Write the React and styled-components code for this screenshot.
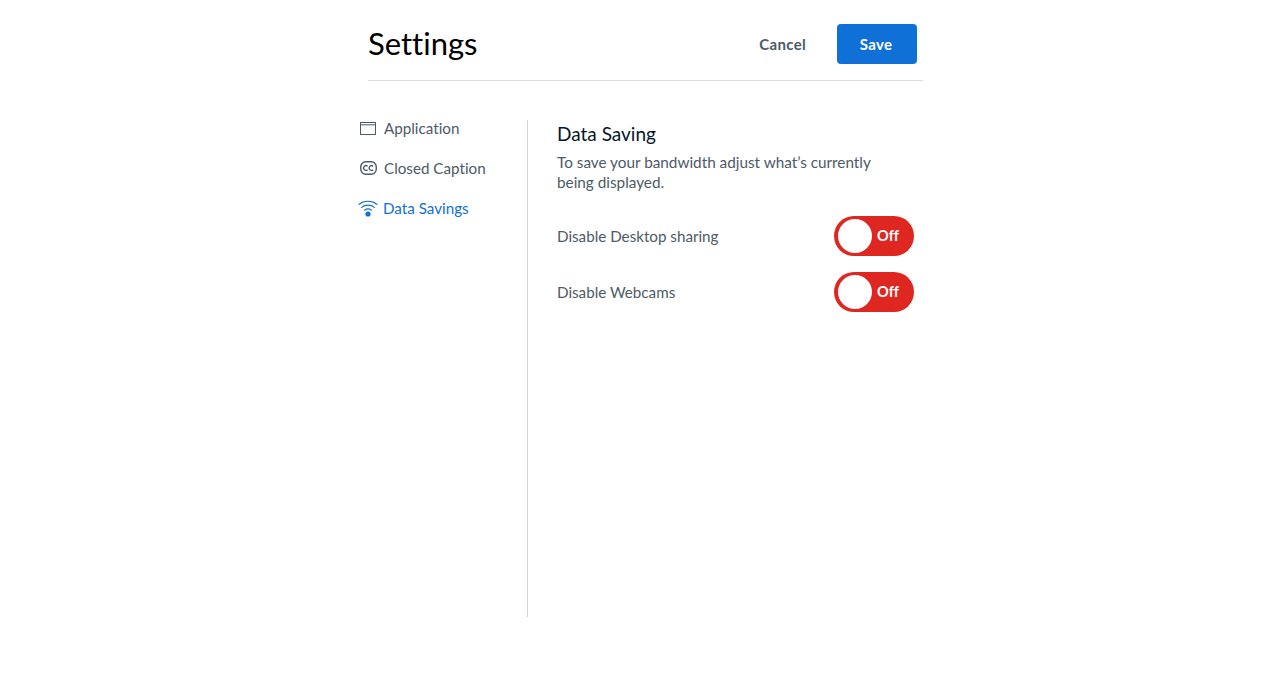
import React from 'react';
import styled, { createGlobalStyle } from 'styled-components';

const Global = createGlobalStyle`
  html, body { margin: 0; padding: 0; background: #fff; }
  body {
    font-family: Lato, "Open Sans", "Liberation Sans", sans-serif;
    font-variant-ligatures: none;
  }
`;

const Page = styled.div`
  width: 566px;
  margin: 0 auto;
  padding-top: 24px;
`;

const Header = styled.header`
  display: flex;
  align-items: flex-start;
  justify-content: space-between;
  height: 56px;
  margin-left: 11px;
  padding-right: 6px;
  border-bottom: 1px solid #d9dce1;
`;

const Title = styled.h1`
  margin: 0;
  font-size: 31px;
  line-height: 38px;
  font-weight: 400;
  color: #000;
`;

const Actions = styled.div`
  display: flex;
  align-items: center;
  gap: 31px;
`;

const CancelButton = styled.button`
  border: 0;
  padding: 0;
  background: none;
  font: 700 15px Lato, sans-serif;
  font-variant-ligatures: none;
  letter-spacing: 0.3px;
  color: #4e5a66;
`;

const SaveButton = styled.button`
  width: 80px;
  height: 40px;
  padding: 0 2px 0 0;
  border: 0;
  border-radius: 4px;
  background: #0f70d7;
  color: #fff;
  font: 700 15px Lato, sans-serif;
  letter-spacing: 0.3px;
`;

const Body = styled.div`
  display: flex;
  margin-top: 39px;
  height: 497px;
`;

const Sidebar = styled.nav`
  width: 170px;
  border-right: 1px solid #d0d3d8;
  display: flex;
  flex-direction: column;
  gap: 24px;
`;

const NavItem = styled.a`
  display: grid;
  grid-template-columns: 22px auto;
  grid-template-rows: 16px;
  justify-content: start;
  justify-items: center;
  align-items: center;
  height: 16px;
  line-height: 16px;
  column-gap: ${(p) => (p.$active ? '4px' : '5px')};
  font-size: 15.2px;
  color: ${(p) => (p.$active ? '#0f70d7' : '#4e5a66')};
`;

const Content = styled.section`
  flex: 1;
  padding: 2px 9px 0 29px;
`;

const SectionTitle = styled.h2`
  margin: 0;
  font-size: 19px;
  line-height: 24px;
  font-weight: 400;
  color: #06172a;
`;

const Description = styled.p`
  margin: 6px 0 24px;
  max-width: 340px;
  font-size: 15.3px;
  line-height: 20px;
  color: #4e5a66;
`;

const Row = styled.div`
  display: flex;
  align-items: center;
  justify-content: space-between;
  height: 40px;
  margin-bottom: 16px;
  font-size: 15.2px;
  color: #4e5a66;
`;

const Toggle = styled.button`
  display: flex;
  align-items: center;
  gap: 5px;
  width: 80px;
  height: 40px;
  padding: 0 0 2px 4px;
  border: 0;
  border-radius: 20px;
  background: #df2721;
  color: #fff;
  font: 700 14.5px Lato, sans-serif;
  font-variant-ligatures: none;
`;

const Knob = styled.span`
  width: 34px;
  height: 34px;
  margin-top: 2px;
  border-radius: 50%;
  background: #fff;
`;

const AppIcon = () => (
  <svg width="16" height="13" viewBox="0 0 16 13" fill="none" stroke="#4e5a66" strokeWidth="1">
    <rect x="0.5" y="0.5" width="15" height="12" />
    <path d="M0.5 2.8h15" />
  </svg>
);

const CcIcon = () => (
  <svg width="17" height="14" viewBox="0 0 17 14" fill="none" stroke="#4e5a66">
    <rect x="0.75" y="0.75" width="15.5" height="12.5" rx="5" strokeWidth="1.4" />
    <path d="M7.6 5.2a2.4 2.4 0 1 0 0 3.6M13.2 5.2a2.4 2.4 0 1 0 0 3.6" strokeWidth="1.3" />
  </svg>
);

const WifiIcon = () => (
  <svg width="20" height="17" viewBox="0 0 20 17" fill="none" stroke="#0f70d7" strokeWidth="1.2" strokeLinecap="round">
    <path d="M1 4.4C6 .2 14 .2 19 4.4" />
    <path d="M3.6 7.4c3.6-3 9.2-3 12.8 0" />
    <path d="M6.6 10.2c2-1.5 4.8-1.5 6.8 0" />
    <circle cx="10" cy="14" r="2.6" fill="#0f70d7" stroke="none" />
  </svg>
);

export default function App() {
  return (
    <>
      <Global />
      <Page>
        <Header>
          <Title>Settings</Title>
          <Actions>
            <CancelButton>Cancel</CancelButton>
            <SaveButton>Save</SaveButton>
          </Actions>
        </Header>
        <Body>
          <Sidebar>
            <NavItem><AppIcon />Application</NavItem>
            <NavItem><CcIcon />Closed Caption</NavItem>
            <NavItem $active><WifiIcon />Data Savings</NavItem>
          </Sidebar>
          <Content>
            <SectionTitle>Data Saving</SectionTitle>
            <Description>To save your bandwidth adjust what’s currently being displayed.</Description>
            <Row>Disable Desktop sharing<Toggle><Knob />Off</Toggle></Row>
            <Row>Disable Webcams<Toggle><Knob />Off</Toggle></Row>
          </Content>
        </Body>
      </Page>
    </>
  );
}
